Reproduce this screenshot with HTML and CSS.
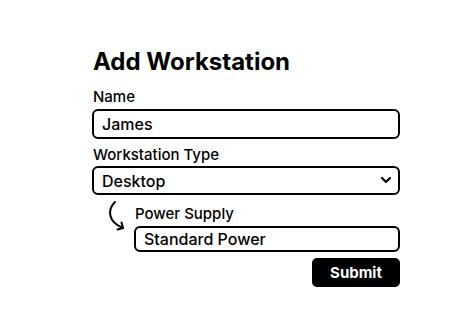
FILE: index.html
```html
<!DOCTYPE html>
<html lang="en">
<head>
  <meta charset="UTF-8">
  <title>Add Workstation</title>
  <link rel="stylesheet" href="styles.css">
</head>
<body>

<form class="ws-form">
  <h1 class="ws-title">Add Workstation</h1>

  <label class="ws-label" for="name">Name</label>
  <input class="ws-input" id="name" type="text" value="James">

  <label class="ws-label ws-label-gap" for="type">Workstation Type</label>
  <div class="select-wrap">
    <select class="ws-input ws-select" id="type">
      <option>Desktop</option>
      <option>Laptop</option>
    </select>
    <svg class="chevron" width="12" height="8" viewBox="0 0 12 8">
      <path d="M2 2 L6 6 L10 2" fill="none" stroke="#000" stroke-width="2.2" stroke-linecap="round" stroke-linejoin="round"/>
    </svg>
  </div>

  <div class="sub-row">
    <svg class="sub-arrow" width="42" height="32" viewBox="0 0 42 32">
      <path d="M23 2 C15 10, 16 22, 31 28" fill="none" stroke="#000" stroke-width="2" stroke-linecap="round"/>
      <path d="M31 28 L25.5 29.5 M31 28 L29.5 22.5" fill="none" stroke="#000" stroke-width="2" stroke-linecap="round"/>
    </svg>
    <div class="sub-field">
      <label class="ws-label" for="power">Power Supply</label>
      <input class="ws-input ws-input-small" id="power" type="text" value="Standard Power">
    </div>
  </div>

  <div class="actions">
    <button class="submit-btn" type="button">Submit</button>
  </div>
</form>

</body>
</html>
```

FILE: styles.css
```css
html, body {
  margin: 0;
  padding: 0;
  background-color: white;
  color: black;
  font-family: Inter, 'Liberation Sans', sans-serif;
}

.ws-form {
  display: flex;
  flex-direction: column;
  width: 308px;
  margin: 0 0 0 92px;
  padding-top: 47px;
}

.ws-title {
  margin: 0 0 11px 1px;
  font-size: 24px;
  line-height: 30px;
  font-weight: 700;
  letter-spacing: 0;
}

.ws-label {
  display: block;
  margin-left: 1px;
  font-size: 15px;
  line-height: 18px;
  font-weight: 500;
}

.ws-label-gap {
  margin-top: 7px;
}

.ws-input {
  box-sizing: border-box;
  width: 100%;
  height: 30px;
  margin-top: 3px;
  padding: 0 0 0 8px;
  border: 2px solid black;
  border-radius: 6px;
  background: white;
  color: black;
  font-family: inherit;
  font-size: 16px;
  font-weight: 500;
  outline: none;
}

.select-wrap {
  position: relative;
  margin-top: -1px;
}

.ws-select {
  height: 29px;
  appearance: none;
  -webkit-appearance: none;
}

.chevron {
  position: absolute;
  right: 8px;
  top: 13px;
}

.sub-row {
  display: flex;
  margin-top: 10px;
}

.sub-arrow {
  flex: 0 0 42px;
  margin-top: -5px;
}

.sub-field {
  flex: 1;
}

.ws-input-small {
  height: 26px;
}

.actions {
  display: flex;
  justify-content: flex-end;
  margin-top: 6px;
}

.submit-btn {
  width: 88px;
  height: 29px;
  border: none;
  border-radius: 5px;
  background: black;
  color: white;
  font-family: inherit;
  font-size: 15px;
  font-weight: 700;
  cursor: pointer;
}
```
